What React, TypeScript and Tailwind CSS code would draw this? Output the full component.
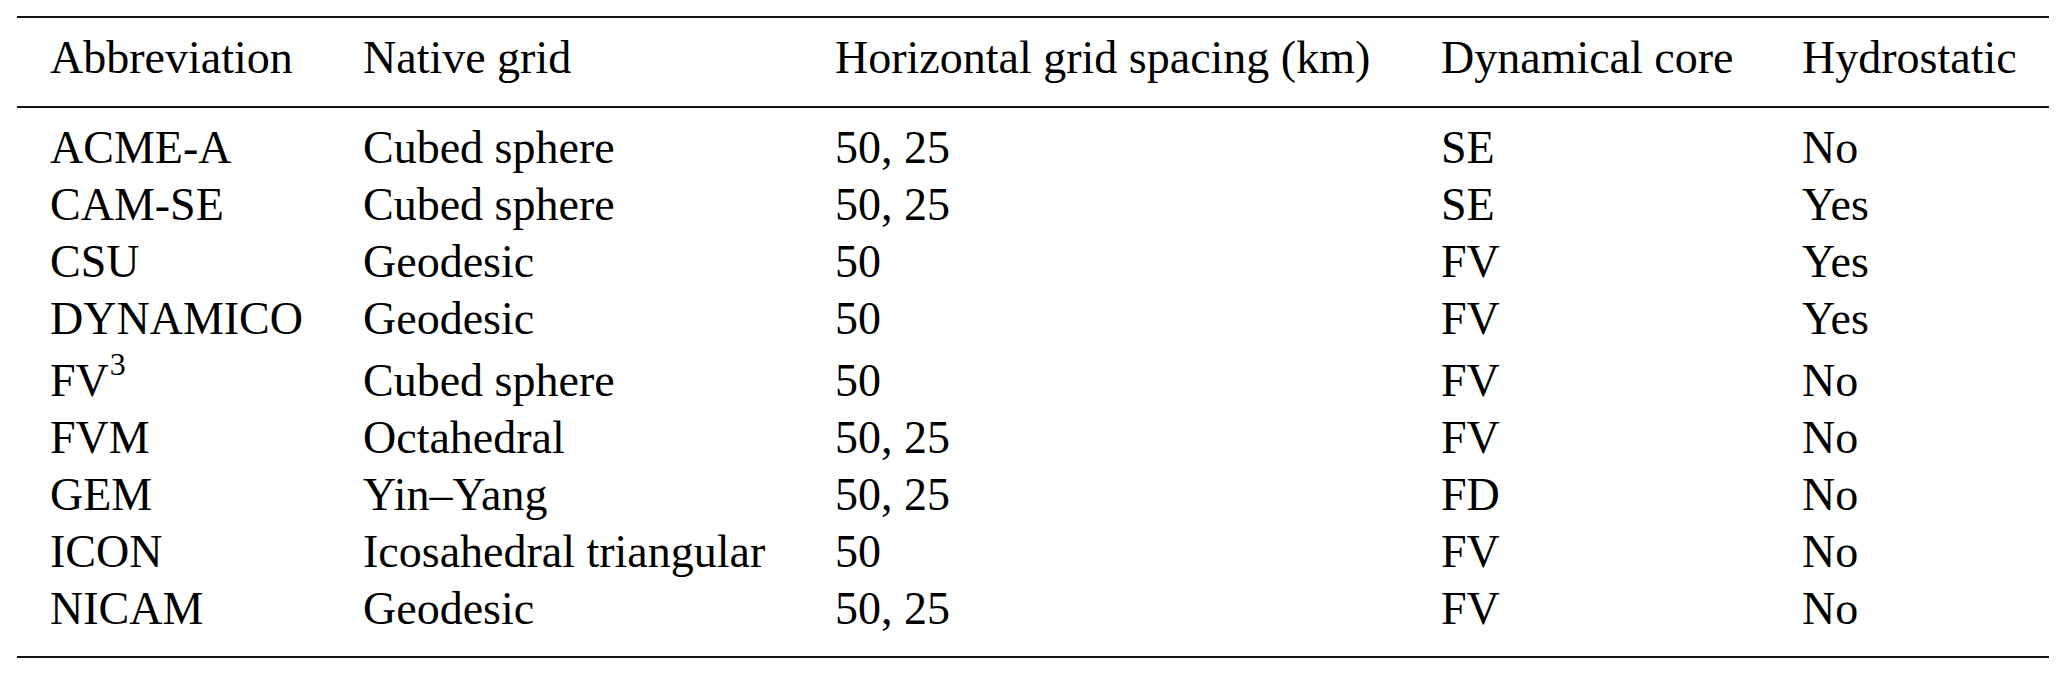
// Model comparison table: booktabs-style rules, serif text, five columns.

type Row = {
  name: string;
  sup?: string;
  grid: string;
  spacing: string;
  core: string;
  hydro: string;
};

const rows: Row[] = [
  { name: "ACME-A", grid: "Cubed sphere", spacing: "50, 25", core: "SE", hydro: "No" },
  { name: "CAM-SE", grid: "Cubed sphere", spacing: "50, 25", core: "SE", hydro: "Yes" },
  { name: "CSU", grid: "Geodesic", spacing: "50", core: "FV", hydro: "Yes" },
  { name: "DYNAMICO", grid: "Geodesic", spacing: "50", core: "FV", hydro: "Yes" },
  { name: "FV", sup: "3", grid: "Cubed sphere", spacing: "50", core: "FV", hydro: "No" },
  { name: "FVM", grid: "Octahedral", spacing: "50, 25", core: "FV", hydro: "No" },
  { name: "GEM", grid: "Yin\u2013Yang", spacing: "50, 25", core: "FD", hydro: "No" },
  { name: "ICON", grid: "Icosahedral triangular", spacing: "50", core: "FV", hydro: "No" },
  { name: "NICAM", grid: "Geodesic", spacing: "50, 25", core: "FV", hydro: "No" },
];

const cols = "grid grid-cols-[313px_472px_606px_361px_1fr]";

function Rule() {
  return <div className="h-[2px] bg-[#141414]" />;
}

export default function App() {
  return (
    <div className="h-[676px] w-[2067px] bg-white pl-[17px] pr-[18px] pt-[16px] font-['Liberation_Serif','Times_New_Roman',serif] text-[46px] leading-[57px] text-black">
      <Rule />
      <div className={`${cols} pt-[11px] pb-[20px]`}>
        <div className="pl-[33px] whitespace-nowrap">Abbreviation</div>
        <div className="pl-[33px] whitespace-nowrap">Native grid</div>
        <div className="pl-[33px] whitespace-nowrap">Horizontal grid spacing (km)</div>
        <div className="pl-[33px] whitespace-nowrap">Dynamical core</div>
        <div className="pl-[33px] whitespace-nowrap">Hydrostatic</div>
      </div>
      <Rule />
      <div className="pt-[11px] pb-[19px]">
        {rows.map((r) => (
          <div key={r.name + (r.sup ?? "")} className={`${cols} ${r.sup ? "pt-[5px]" : ""}`}>
            <div className="pl-[33px] whitespace-nowrap">
              {r.name}
              {r.sup && (
                <sup className="relative -top-[21px] ml-[1px] align-baseline text-[32px] leading-none">
                  {r.sup}
                </sup>
              )}
            </div>
            <div className="pl-[33px] whitespace-nowrap">{r.grid}</div>
            <div className="pl-[33px] whitespace-nowrap">{r.spacing}</div>
            <div className="pl-[33px] whitespace-nowrap">{r.core}</div>
            <div className="pl-[33px] whitespace-nowrap">{r.hydro}</div>
          </div>
        ))}
      </div>
      <Rule />
    </div>
  );
}
